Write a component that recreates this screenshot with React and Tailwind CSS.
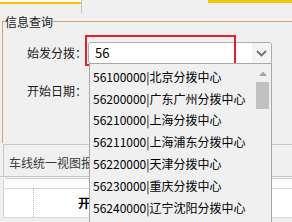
import React from "react";

const items = [
  "56100000|北京分拨中心",
  "56200000|广东广州分拨中心",
  "56210000|上海分拨中心",
  "56211000|上海浦东分拨中心",
  "56220000|天津分拨中心",
  "56230000|重庆分拨中心",
  "56240000|辽宁沈阳分拨中心",
];

export default function App() {
  return (
    <div
      className="relative w-[292px] h-[222px] overflow-hidden bg-[#f0f0f0] text-[12px] text-[#111]"
      style={{ fontFamily: '"Noto Sans CJK SC", "Microsoft YaHei", sans-serif' }}
    >
      {/* top strip */}
      <div className="flex h-[13px]">
        <div className="w-[82px] h-[13px] border-r border-[#c4c4c4]">
          <div className="h-[2px] bg-white" />
          <div className="h-[2px] bg-[#f5c400]" />
        </div>
        <div className="ml-[126px] flex-1 h-[3px] bg-[#f5c400]" />
      </div>

      {/* fieldset */}
      <div className="mt-[8px] ml-[2px] h-[122px] border-t border-l border-[#d6a26a]">
        <div className="-mt-[8px] ml-[2px] w-fit bg-[#f0f0f0] px-0 leading-[16px] text-[#1a1a1a]">
          信息查询
        </div>
        <div className="mt-[12px] flex items-center h-[22px]">
          <div className="ml-[24px] w-[61px] leading-[16px] text-[#1a1a1a]">始发分拨：</div>
          <div className="flex w-[184px] h-[22px] rounded-[3px] border border-[#adadad] bg-white">
            <div className="flex-1 pl-[6px] text-[13px] leading-[20px] text-black">56</div>
            <div className="w-[19px] flex items-center justify-center bg-[#f4f4f4] rounded-r-[3px]">
              <svg width="11" height="7" viewBox="0 0 11 7">
                <polyline points="1,1 5.5,5.5 10,1" fill="none" stroke="#707070" strokeWidth="1.8" />
              </svg>
            </div>
          </div>
        </div>
        <div className="mt-[16px] flex items-center h-[22px]">
          <div className="ml-[24px] w-[61px] leading-[16px] text-[#1a1a1a]">开始日期：</div>
        </div>
      </div>

      {/* tab strip */}
      <div className="mt-[1px] h-[33px] flex border-b border-[#c8c8c8]">
        <div className="ml-[3px] flex-1 h-[32px] border-t border-l border-[#c8c8c8] bg-[#f0f0f0] pl-[5px] pt-[10px] leading-[16px] text-[#3a3a3a]">
          <div className="w-[80px] overflow-hidden whitespace-nowrap">车线统一视图报表</div>
        </div>
      </div>

      {/* panel */}
      <div className="mt-[1px] ml-[3px] rounded-tl-[4px] border-t border-l border-[#d0d0d0] bg-white">
        <div className="h-[10px] bg-[#fbfbfb] border-b border-[#d6d6d6]" />
        <div className="flex h-[29px] border-b border-[#d6d6d6]">
          <div className="w-[30px] border-r border-dotted border-[#bdbdbd]" />
          <div className="ml-[44px] w-[12px] overflow-hidden whitespace-nowrap flex items-center font-bold text-black leading-[16px]">开始日期</div>
        </div>
      </div>

      {/* red annotation */}
      <div className="absolute left-[85px] top-[35px] w-[151px] h-[31px] border-2 border-[#e5202a]" />

      {/* dropdown list */}
      <div className="absolute left-[89px] top-[63px] w-[183px] h-[170px] border border-[#a8a8a8] bg-[#f0f0f0] flex">
        <div className="flex-1 pt-[2px] pl-[3px]">
          {items.map((t) => (
            <div key={t} className="h-[21.8px] flex items-center leading-[16px] text-black whitespace-nowrap">
              {t}
            </div>
          ))}
        </div>
        <div className="w-[15px] flex flex-col items-center mr-[1px]">
          <div className="h-[18px] flex items-center justify-center">
            <svg width="8" height="5" viewBox="0 0 8 5">
              <polygon points="0,5 4,0.5 8,5" fill="#a5a5a5" />
            </svg>
          </div>
          <div className="w-[13px] h-[27px] bg-[#c1c1c1]" />
        </div>
      </div>
    </div>
  );
}
